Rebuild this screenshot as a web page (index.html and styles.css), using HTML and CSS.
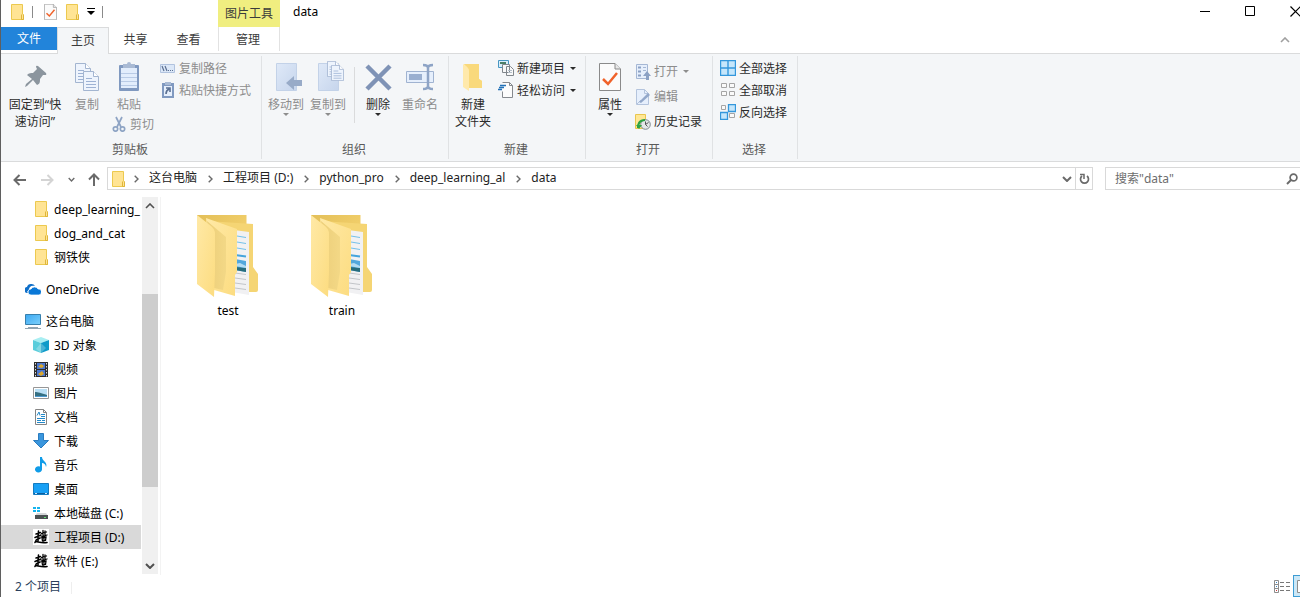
FILE: index.html
```html
<!DOCTYPE html>
<html lang="zh-CN">
<head>
<meta charset="utf-8">
<title>data</title>
<link rel="stylesheet" href="styles.css">
</head>
<body>
<svg class="defs" aria-hidden="true">
  <defs>
    <linearGradient id="gFront" x1="0" y1="0" x2="1" y2="1"><stop offset="0" stop-color="#ffe9a6"/><stop offset="1" stop-color="#fcdc80"/></linearGradient>
    <linearGradient id="gBack" x1="0" y1="0" x2="1" y2="1"><stop offset="0" stop-color="#e3bf58"/><stop offset="1" stop-color="#fbd977"/></linearGradient>
    <linearGradient id="gMid" x1="0" y1="0" x2="1" y2="0"><stop offset="0" stop-color="#ecce79"/><stop offset="1" stop-color="#f3d886"/></linearGradient>
    <linearGradient id="gBlue" x1="0" y1="0" x2="1" y2="1"><stop offset="0" stop-color="#3ba8f2"/><stop offset="1" stop-color="#7cd0fb"/></linearGradient>
    <linearGradient id="gSteel" x1="0" y1="0" x2="1" y2="1"><stop offset="0" stop-color="#dfe9f8"/><stop offset="1" stop-color="#c6d5ec"/></linearGradient>
    <symbol id="folder" viewBox="0 0 16 16"><path d="M2.500 .5h11v9.500l1 1v4.500h-12z" fill="#ffe494" stroke="#ecc94f"/><path d="M12.500 10.500v5M14.500 10.500v5h-2" fill="none" stroke="#dfb63a"/></symbol>
    <symbol id="caret" viewBox="0 0 6 3"><path d="M0 0h6L3 3z" fill="currentColor"/></symbol>
    <symbol id="chevDown" viewBox="0 0 10 6"><path d="M1 1l4 4 4-4" fill="none" stroke="currentColor" stroke-width="2"/></symbol>
    <symbol id="chevRight" viewBox="0 0 5 8"><path d="M.7.7L4 4 .7 7.300" fill="none" stroke="currentColor" stroke-width="1.400"/></symbol>
    <symbol id="chevUp" viewBox="0 0 10 6"><path d="M1 5l4-4 4 4" fill="none" stroke="currentColor" stroke-width="1.600"/></symbol>
    <symbol id="arrow" viewBox="0 0 14 12"><path d="M6.500 1L1.500 6l5 5M1.500 6H13" fill="none" stroke="currentColor" stroke-width="2"/></symbol>
    <symbol id="page" viewBox="0 0 16 20"><path d="M.5.5h10l5 5v14H.5z" fill="#eef4fd" stroke="#a3b5d0"/><path d="M10.500.5v5h5" fill="#fff" stroke="#a3b5d0"/><path d="M3 7.500h6M3 10.500h10M3 13.500h10M3 16.500h10" stroke="#9db2d4"/></symbol>
    <symbol id="propDoc" viewBox="0 0 22 28"><path d="M.5.5h15.500l5.500 5.500v21.500H.5z" fill="#fbfbfb" stroke="#8a8a8a"/><path d="M16 .5V6h5.500" fill="#e8e8e8" stroke="#8a8a8a"/><path d="M4 16l5 5 9-11" fill="none" stroke="#f0622a" stroke-width="2.500"/></symbol>
    <symbol id="seal" viewBox="0 0 16 16"><path d="M0 0h16v16H0z" fill="#fff"/><path d="M5.500 2L5 8M3 5l4.500-1.500M2 8.500L8 6M5 8v4M5 10l2-1M3.500 10.500L2 13.500M3 12.500c3 .5 6 2 11 1" fill="none" stroke="#000" stroke-width="1.600" stroke-linecap="round"/><path d="M8.500 4.500L13.500 3M10 1.500v6M12 2v5M8 8l6-2M9 9l.5 3M9 9l4-1-.5 3.500-3 .5M11 8v4" fill="none" stroke="#000" stroke-width="1.300" stroke-linecap="round"/></symbol>
    <symbol id="openFolder" viewBox="0 0 62 84">
      <path d="M0 1h49.500v60H0z" fill="url(#gBack)"/>
      <path d="M10 7L56 10v43l5 7v16q0 2-2 2H30z" fill="#f5d574"/>
      <path d="M37 16l15 2v63l-17-3z" fill="#f1f1f3"/>
      <path d="M38 59l11 1.500M38 64l11 1.500M38 69l11 1.500M38 74l11 1.500" stroke="#c2c5c9"/>
      <path d="M40 22l9 1.500M40 28l9 1.500M40 34l9 1.500" stroke="#73c1ea"/><path d="M38 41l11 1.500" stroke="#45a4dc" stroke-width="2"/>
      <path d="M38 45l11 2v11l-11-2z" fill="#51a7dc"/><path d="M38 53l11 1v4l-11-2z" fill="#286d7d"/><path d="M38 50l5-1 6 3v2l-11-2z" fill="#b4dcf2"/>
      <path d="M9 4l31 11v43l-2 3v21L17 76z" fill="url(#gFront)"/>
      <path d="M10 7l19 16v35l-3 18-9-2z" fill="url(#gMid)"/>
      <path d="M0 1l14 11q4 3 4 8v38l-1 25L0 70z" fill="url(#gFront)"/>
    </symbol>
  </defs>
</svg>

<div class="window">
  <header class="top">
    <div class="lead">
      <div class="quick">
        <svg class="i16"><use href="#folder"/></svg>
        <span class="bar"></span>
        <button class="plain" aria-label="属性"><svg width="13" height="16"><use href="#propDoc"/></svg></button>
        <button class="plain" aria-label="新建文件夹"><svg class="i16"><use href="#folder"/></svg></button>
        <button class="plain" aria-label="自定义"><svg width="8" height="7" viewBox="0 0 8 7"><path d="M0 .5h8" stroke="#000"/><path d="M0 3h8L4 7z"/></svg></button>
        <span class="bar"></span>
      </div>
      <nav class="tabs">
        <button class="tab file">文件</button>
        <button class="tab active">主页</button>
        <button class="tab">共享</button>
        <button class="tab">查看</button>
      </nav>
    </div>
    <div class="context">
      <div class="context-title">图片工具</div>
      <button class="context-tab">管理</button>
    </div>
    <h1 class="title">data</h1>
    <div class="controls">
      <div class="caption">
        <button class="plain" aria-label="最小化"><svg width="11" height="11"><path d="M0 5.500h10" stroke="#000"/></svg></button>
        <button class="plain" aria-label="最大化"><svg width="11" height="11"><path d="M.5.5h9v9h-9z" fill="none" stroke="#000"/></svg></button>
        <button class="plain" aria-label="关闭"><svg width="11" height="11"><path d="M.5.5l10 10M10.500.5l-10 10" stroke="#000" stroke-width="1.200"/></svg></button>
      </div>
      <button class="plain collapse" aria-label="折叠功能区"><svg width="10" height="6"><use href="#chevUp"/></svg></button>
    </div>
  </header>

  <section class="ribbon">
    <div class="group g-clip">
      <div class="tools">
        <button class="big wide"><svg class="i32" viewBox="0 0 32 32"><path d="M19 5l8 7q1 2-1 2l-2 0-3 4c0 3 0 5-3 6l-4-5-6 6-2 1 1-3 6-5-5-4c2-2 4-2 6-2l4-4-1-2q0-2 2-1z" fill="#8b959e"/></svg><span>固定到“快<br>速访问”</span></button>
        <button class="big dim"><svg class="i32" viewBox="0 0 32 32"><use href="#page" x="4" y="2" width="16" height="20"/><use href="#page" x="12" y="10" width="16" height="20"/></svg><span>复制</span></button>
        <div class="stack">
          <button class="big dim"><svg class="i32" viewBox="0 0 32 32"><path d="M7 4h18q1 0 1 1v24q0 1-1 1H7q-1 0-1-1V5q0-1 1-1z" fill="#8099c0"/><path d="M8 7h16v20H8z" fill="#e2edfc"/><path d="M8 12.500h16M8 16.500h16M8 20.500h16M8 24.500h16" stroke="#b9cbe6"/><path d="M10 3h4q0-2 2-2t2 2h4v4H10z" fill="#a9bad4"/></svg><span>粘贴</span></button>
          <button class="row dim cut"><svg class="i16" viewBox="0 0 16 16"><g fill="none" stroke="#8ea4c4" stroke-width="1.700"><path d="M5 1l5 10M11 1L6 11"/><circle cx="4.500" cy="13" r="2.200"/><circle cx="11.500" cy="13" r="2.200"/></g></svg><span>剪切</span></button>
        </div>
        <div class="list">
          <button class="row dim"><svg class="i16" viewBox="0 0 16 16"><path d="M.5 4.500h14v8H.5z" fill="#dce8f8" stroke="#b1c3df"/><path d="M2 6l2 5M5 6l2 5" stroke="#5b7092" stroke-width="1.200"/><path d="M8 10.500h1M10 10.500h1M12 10.500h1" stroke="#5b7092"/></svg><span>复制路径</span></button>
          <button class="row dim"><svg class="i16" viewBox="0 0 16 16"><path d="M2 1h12v15H2z" fill="#8099c0"/><path d="M4 4h8v10H4z" fill="#e6effc"/><path d="M5 0h6v3H5z" fill="#a9bad4"/><path d="M6 12c0-3 1-4 3-5M6 6h4v4" fill="none" stroke="#5b7092" stroke-width="1.600"/></svg><span>粘贴快捷方式</span></button>
        </div>
      </div>
      <div class="label">剪贴板</div>
    </div>

    <div class="group g-org">
      <div class="tools">
        <button class="big dim"><svg class="i32" viewBox="0 0 32 32"><path d="M6.500 2.500h20v27h-20z" fill="url(#gSteel)" stroke="#c3d2e8"/><path d="M16 22l8-7v4h8v6h-8v4z" fill="#98abc8"/></svg><span>移动到</span><svg class="drop"><use href="#caret"/></svg></button>
        <button class="big dim"><svg class="i32" viewBox="0 0 32 32"><path d="M6.500 2.500h20v27h-20z" fill="url(#gSteel)" stroke="#c3d2e8"/><use href="#page" x="15" y="0" width="13" height="16"/><use href="#page" x="19" y="4" width="13" height="16"/></svg><span>复制到</span><svg class="drop"><use href="#caret"/></svg></button>
        <span class="divider"></span>
        <button class="big"><svg class="i32" viewBox="0 0 32 32"><path d="M5 5l23 23M28 5L5 28" stroke="#7f93b6" stroke-width="4.500"/></svg><span>删除</span><svg class="drop"><use href="#caret"/></svg></button>
        <button class="big dim"><svg class="i32" viewBox="0 0 32 32"><path d="M2.500 10.500h27v11h-27z" fill="#e6effc" stroke="#a0b3d1"/><path d="M5 13h13v6H5z" fill="#9aafd0"/><path d="M19 4q5 0 5 3v18q0 3-5 3M29 4q-5 0-5 3M24 25q0 3 5 3" fill="none" stroke="#8ea4c6" stroke-width="2.500"/></svg><span>重命名</span></button>
      </div>
      <div class="label">组织</div>
    </div>

    <div class="group g-new">
      <div class="tools">
        <button class="big"><svg class="i32" viewBox="0 0 32 32"><path d="M7 3h15v15l3 2v7H12z" fill="url(#gFront)"/><path d="M12 27V10q0-2-2-4L7 3h15v15l3 2v7z" fill="#f9d97c"/><path d="M6 3l4 3q2 2 2 4v20l-6-4z" fill="#ffe9ab"/></svg><span>新建<br>文件夹</span></button>
        <div class="list">
          <button class="row"><svg class="i16" viewBox="0 0 16 16"><path d="M.5.5h10v7H.5z" fill="#d9eefb" stroke="#4796c2"/><path d="M2 3h6" stroke="#4c7f68" stroke-width="2"/><path d="M4.500 4.500h7v8h-7zM8.500 6.500h4l3 3v6h-7z" fill="#f8f8f8" stroke="#80868c"/><path d="M10 10.500h4M10 12.500h4" stroke="#b4bfca"/></svg><span>新建项目</span><svg class="drop"><use href="#caret"/></svg></button>
          <button class="row"><svg class="i16" viewBox="0 0 16 16"><path d="M4.500.5h7l3 3v12h-10" fill="#fcfcfc" stroke="#85898e"/><path d="M4.500 9.500v6M11.500.5v3h3" fill="none" stroke="#85898e"/><path d="M2 3.500h6M1 5.500h5M0 7.500h4" stroke="#2372b8" stroke-width="1.300"/></svg><span>轻松访问</span><svg class="drop"><use href="#caret"/></svg></button>
        </div>
      </div>
      <div class="label">新建</div>
    </div>

    <div class="group g-open">
      <div class="tools">
        <button class="big"><svg class="i32" viewBox="0 0 32 32"><use href="#propDoc" x="5" y="2" width="22" height="28"/></svg><span>属性</span><svg class="drop"><use href="#caret"/></svg></button>
        <div class="list loose">
          <button class="row dim"><svg class="i16" viewBox="0 0 16 16"><path d="M1.500.5h11v14h-11z" fill="#e6effc" stroke="#a5b7d4"/><path d="M3 3.500h3M3 7.500h3M3 11.500h3" stroke="#8ba1c4" stroke-width="2"/><path d="M8 3.500h3M8 6.500h3" stroke="#a5b7d4"/><path d="M11 16v-4H8l4-5 4 5h-2v4z" fill="#8ba1c4"/></svg><span>打开</span><svg class="drop"><use href="#caret"/></svg></button>
          <button class="row dim"><svg class="i16" viewBox="0 0 16 16"><path d="M1.500.5h8l4 4v11h-12z" fill="#e6effc" stroke="#b4c4dd"/><path d="M9.500.5v4h4M2 15l4-4" fill="none" stroke="#b4c4dd"/><path d="M4 13l9-9 2 2-9 8z" fill="#93a8ca"/></svg><span>编辑</span></button>
          <button class="row"><svg class="i16" viewBox="0 0 16 16"><path d="M.5.5h10v14H.5z" fill="#ffe795" stroke="#e9c64e"/><circle cx="10.500" cy="10.500" r="4.800" fill="#e3e7e9" stroke="#7f8a8f"/><path d="M10.500 7.500v3l3-2M10.500 10.500l2 2" fill="none" stroke="#555"/><path d="M3 14c0-4 1-8 7-8" fill="none" stroke="#2ca344" stroke-width="2.200"/><path d="M1 11h6l-3 4z" fill="#2ca344"/></svg><span>历史记录</span></button>
        </div>
      </div>
      <div class="label">打开</div>
    </div>

    <div class="group g-select">
      <div class="tools">
        <div class="list">
          <button class="row"><svg class="i16" viewBox="0 0 16 16"><path d="M.5.5h15v15H.5zM8 0v16M0 8h16" fill="#c5e6fb" stroke="#3397dc" stroke-width="1.400"/></svg><span>全部选择</span></button>
          <button class="row"><svg class="i16" viewBox="0 0 16 16"><path d="M1.500 1.500h5v4h-5zM9.500 1.500h5v4h-5zM1.500 9.500h5v4h-5zM9.500 9.500h5v4h-5z" fill="#fafafa" stroke="#a5a5a5"/></svg><span>全部取消</span></button>
          <button class="row"><svg class="i16" viewBox="0 0 16 16"><path d="M1.500 1.500h4v4h-4zM9.500 9.500h5v4h-5z" fill="#fafafa" stroke="#a5a5a5"/><path d="M8.500.5h7v7h-7zM.5 8.500h7v7h-7z" fill="#c5e6fb" stroke="#3397dc" stroke-width="1.300"/></svg><span>反向选择</span></button>
        </div>
      </div>
      <div class="label">选择</div>
    </div>
  </section>

  <div class="address-row">
    <div class="history">
      <button class="plain" aria-label="后退"><svg width="14" height="12"><use href="#arrow"/></svg></button>
      <button class="plain off" aria-label="前进"><svg width="14" height="12" viewBox="0 0 14 12"><path d="M7.500 1l5 5-5 5M12.500 6H1" fill="none" stroke="currentColor" stroke-width="2"/></svg></button>
      <button class="plain" aria-label="最近位置"><svg width="7" height="5"><use href="#chevDown"/></svg></button>
      <button class="plain" aria-label="向上"><svg width="12" height="14" viewBox="0 0 12 14"><path d="M1 6.500l5-5 5 5M6 1.500V13" fill="none" stroke="currentColor" stroke-width="2"/></svg></button>
    </div>
    <div class="address">
      <svg class="i16"><use href="#folder"/></svg>
      <svg class="sep first"><use href="#chevRight"/></svg><a href="#">这台电脑</a>
      <svg class="sep"><use href="#chevRight"/></svg><a href="#">工程项目 (D:)</a>
      <svg class="sep"><use href="#chevRight"/></svg><a href="#">python_pro</a>
      <svg class="sep"><use href="#chevRight"/></svg><a href="#">deep_learning_al</a>
      <svg class="sep"><use href="#chevRight"/></svg><a href="#">data</a>
      <button class="plain more" aria-label="以前的位置"><svg width="10" height="6"><use href="#chevDown"/></svg></button>
      <button class="plain refresh" aria-label="刷新"><svg width="11" height="12" viewBox="0 0 11 12"><path d="M3 3a4 4 0 1 0 5 0" fill="none" stroke="currentColor" stroke-width="1.700"/><path d="M1 1.500h4V6" fill="none" stroke="currentColor" stroke-width="1.500"/></svg></button>
    </div>
    <div class="search">
      <input type="text" placeholder="搜索&quot;data&quot;" aria-label="搜索">
      <button class="plain" aria-label="搜索"><svg width="12" height="12" viewBox="0 0 12 12"><circle cx="7.500" cy="4.500" r="3.400" fill="none" stroke="currentColor" stroke-width="1.700"/><path d="M5 7L1 11" stroke="currentColor" stroke-width="2"/></svg></button>
    </div>
  </div>

  <main class="body">
    <nav class="tree">
      <a class="node sub" href="#"><svg class="i16"><use href="#folder"/></svg><span>deep_learning_</span></a>
      <a class="node sub" href="#"><svg class="i16"><use href="#folder"/></svg><span>dog_and_cat</span></a>
      <a class="node sub" href="#"><svg class="i16"><use href="#folder"/></svg><span>钢铁侠</span></a>
      <a class="node root" href="#"><svg class="i16" viewBox="0 0 16 16"><path d="M3 12a3 3 0 0 1-1-6 4 4 0 0 1 4-3 4 4 0 0 1 4 2c-4-1-6 1-6 4-2 1-2 2-1 3z" fill="#0f6fc9"/><path d="M6 14a3 3 0 0 1 0-6 4 4 0 0 1 7 0 3 3 0 0 1 1 6z" fill="#0a78d7" stroke="#fff" stroke-width=".7"/></svg><span>OneDrive</span></a>
      <a class="node root" href="#"><svg class="i16" viewBox="0 0 16 16"><path d="M.5 1.500h15v10H.5z" fill="url(#gBlue)" stroke="#3880ad"/><path d="M3 14.500h10M0 15.500h16" stroke="#92a5b2"/></svg><span>这台电脑</span></a>
      <a class="node sub" href="#"><svg class="i16" viewBox="0 0 16 16"><path d="M0 3l8-3 8 3-8 3z" fill="#a8eef2"/><path d="M0 3l8 3v10l-8-3z" fill="#5acddb"/><path d="M16 3L8 6v10l8-3z" fill="#0e9bc9"/><path d="M8 6l5 5-5 5-5-4z" fill="#fff" opacity=".25"/></svg><span>3D 对象</span></a>
      <a class="node sub" href="#"><svg class="i16" viewBox="0 0 16 16"><path d="M1 1h14v15H1z" fill="#2d2d2d"/><path d="M2.500 2v14M13.500 2v14" stroke="#ddd" stroke-dasharray="1.500 1.500"/><path d="M4 2h8v6H4zM4 9h8v6H4z" fill="#4c78d0"/><path d="M5 6l3-3 3 2-2 2zM5 13l4-3 2 3-3 2z" fill="#dba82d"/></svg><span>视频</span></a>
      <a class="node sub" href="#"><svg class="i16" viewBox="0 0 16 16"><path d="M.5 2.500h15v11H.5z" fill="#fff" stroke="#979797"/><path d="M2 4h12v8H2z" fill="#b9dff5"/><path d="M2 7c3 0 6 1 12 3v2H2z" fill="#357083"/><path d="M2 11h12v1H2z" fill="#4e9ad1"/></svg><span>图片</span></a>
      <a class="node sub" href="#"><svg class="i16" viewBox="0 0 16 16"><path d="M2.500.5h8l3 3v12h-11z" fill="#fff" stroke="#858585"/><path d="M10.500.5v3h3" fill="none" stroke="#858585"/><path d="M4 6.500l2-3.500 1 3.500M8 5.500h4M8 7.500h4M4 9.500h8M4 11.500h4M9 11.500h3M4 13.500h8" fill="none" stroke="#2489c9"/></svg><span>文档</span></a>
      <a class="node sub" href="#"><svg class="i16" viewBox="0 0 16 16"><path d="M5.500.5h5v7h5L8 15 .5 7.500h5z" fill="#3a96dd" stroke="#2a7cc0"/></svg><span>下载</span></a>
      <a class="node sub" href="#"><svg class="i16" viewBox="0 0 16 16"><path d="M7 0h2c0 4 6 5 4 10-.5-3-2-4-4-4v6.500a3.500 3.200 0 1 1-2-3z" fill="#109ce8"/></svg><span>音乐</span></a>
      <a class="node sub" href="#"><svg class="i16" viewBox="0 0 16 16"><path d="M.5 2.500h15v11H.5z" fill="#18a0f5" stroke="#147bc0"/><path d="M1 12.500h14" stroke="#0b5e9e"/><path d="M2 12.500h2M12 12.500h2" stroke="#cfeaff"/></svg><span>桌面</span></a>
      <a class="node sub" href="#"><svg class="i16" viewBox="0 0 16 16"><path d="M0 2h3v2H0zM4 2h3v2H4zM0 5h3v2H0zM4 5h3v2H4z" fill="#14b4ee"/><path d="M4 8h9l2 3H2z" fill="#d4d6d8"/><path d="M2 10h13v4H2z" fill="#4b5052"/><path d="M11 12.500h2" stroke="#60e070"/></svg><span>本地磁盘 (C:)</span></a>
      <a class="node sub selected" href="#"><svg class="i16"><use href="#seal"/></svg><span>工程项目 (D:)</span></a>
      <a class="node sub" href="#"><svg class="i16"><use href="#seal"/></svg><span>软件 (E:)</span></a>
    </nav>
    <div class="scroll">
      <button class="plain" aria-label="向上滚动"><svg width="10" height="6"><use href="#chevUp"/></svg></button>
      <span class="before"></span><span class="thumb"></span><span class="after"></span>
      <button class="plain" aria-label="向下滚动"><svg width="10" height="6"><use href="#chevDown"/></svg></button>
    </div>
    <section class="files">
      <a class="tile" href="#"><svg width="62" height="84"><use href="#openFolder"/></svg><span>test</span></a>
      <a class="tile" href="#"><svg width="62" height="84"><use href="#openFolder"/></svg><span>train</span></a>
    </section>
  </main>

  <footer class="status">
    <span class="count">2 个项目</span>
    <button class="plain view" aria-label="详细信息"><svg width="17" height="13" viewBox="0 0 17 13"><path d="M.5.5h4v12h-4zM0 4.500h5M0 8.500h5" fill="#fff" stroke="#8d8d8d"/><path d="M6 2.500h4M12 2.500h4M6 6.500h4M12 6.500h4M6 10.500h4M12 10.500h4" stroke="#777"/><path d="M2 2.500h1M2 6.500h1" stroke="#3a87c8"/><path d="M2 10.500h1" stroke="#c33"/></svg></button>
    <button class="plain view on" aria-label="大图标"><svg width="14" height="13"><path d="M.5.5h13v12H.5z" fill="#fff" stroke="#8d8d8d"/></svg></button>
  </footer>
</div>
</body>
</html>
```
FILE: styles.css
```css
* { box-sizing: border-box; }
body {
  margin: 0;
  overflow: hidden;
  background: #fff;
  color: #000;
  font: 12px/17px "Noto Sans", "Noto Sans CJK SC", sans-serif;
}
button, input { font: inherit; color: inherit; }
button { border: 0; padding: 0; background: none; }
a { color: inherit; text-decoration: none; }
svg { display: block; flex: none; }
.defs { position: absolute; width: 0; height: 0; }
.i16 { width: 16px; height: 16px; }
.i32 { width: 32px; height: 32px; }
.plain { display: flex; align-items: center; justify-content: center; }

.window {
  display: flex;
  flex-direction: column;
  height: 100vh;
  border-left: 1px solid #5f5f5f;
}

/* title bar and tabs */
.top { display: flex; flex: none; height: 54px; border-bottom: 1px solid #dadbdc; }
.lead { width: 217px; }
.quick { display: flex; align-items: center; height: 27px; padding: 0 0 4px 8px; gap: 7px; }
.bar { width: 1px; height: 12px; background: #8a8a8a; }
.quick .bar { margin-right: 4px; }
.tabs { display: flex; height: 27px; }
.tab { width: 53px; height: 25px; color: #3b3b3b; }
.tab.file { width: 56px; height: 23px; background: #2284da; color: #fff; }
.tab.active {
  width: 52px;
  height: 27px;
  padding-bottom: 2px;
  border: 1px solid #dadbdc;
  border-bottom: 0;
  background: #f4f6f8;
}
.context { display: flex; flex-direction: column; width: 62px; color: #3b3b3b; }
.context-title { height: 27px; line-height: 27px; text-align: center; background: #f0ee80; }
.context-tab { height: 24px; padding-right: 2px; border: solid #e2e2e2; border-width: 0 1px; }
.title { margin: 3px 13px; font-size: 12px; font-weight: normal; line-height: 17px; }
.controls { margin-left: auto; }
.caption { display: flex; height: 23px; gap: 34px; margin-right: -1px; }
.collapse { width: 30px; height: 34px; margin-left: auto; color: #a0a0a0; }

/* ribbon */
.ribbon { display: flex; flex: none; min-height: 108px; background: #f4f6f8; border-bottom: 1px solid #dadbdc; }
.group {
  display: flex;
  flex-direction: column;
  justify-content: space-between;
  margin: 2px 0;
  padding: 1px 0;
  border-right: 1px solid #e0e2e4;
}
.g-clip { width: 261px; }
.g-org { width: 187px; }
.g-new { width: 137px; }
.g-open { width: 127px; }
.g-select { width: 85px; }
.tools { display: flex; }
.g-clip .tools, .g-org .tools, .g-new .tools, .g-open .tools { padding-left: 3px; }
.label { padding-right: 2px; text-align: center; color: #5a5a5a; }
.big {
  display: flex;
  flex-direction: column;
  align-items: center;
  align-self: flex-start;
  min-width: 42px;
  padding-top: 4px;
  color: #2b2b2b;
  white-space: nowrap;
}
.big span { margin-top: 3px; line-height: 17px; }
.big.wide { min-width: 62px; }
.drop { width: 6px; height: 3px; }
.stack { display: flex; flex-direction: column; align-items: flex-start; width: 49px; }
.row { display: flex; align-items: center; gap: 3px; height: 22px; color: #2b2b2b; white-space: nowrap; }
.row .drop { margin-left: 2px; }
.cut { padding-left: 3px; }
.dim { color: #8d8d8d; }
.list { display: flex; flex-direction: column; margin-left: 4px; }
.g-clip .list { margin-left: 3px; }
.g-select .list { margin-left: 7px; }
.loose { padding-top: 2px; }
.loose .row { height: 25px; }
.divider { width: 1px; margin: 10px 2px 0 5px; height: 56px; background: #dadbdc; }

/* address bar */
.address-row { display: flex; flex: none; align-items: center; height: 35px; padding-bottom: 2px; color: #6a6a6a; }
.history { display: flex; align-items: center; justify-content: space-between; width: 106px; padding: 2px 7px 0 12px; }
.off { color: #d4d4d4; }
.address {
  display: flex;
  flex: 1;
  align-items: center;
  height: 23px;
  padding-left: 2px;
  border: 1px solid #d9d9d9;
}
.address a { padding-bottom: 2px; color: #222; white-space: nowrap; }
.sep { width: 5px; height: 8px; margin: 0 10px 0 11px; }
.sep.first { margin-left: 8px; }
.more { width: 16px; margin-left: auto; }
.refresh { width: 17px; height: 21px; border-left: 1px solid #d9d9d9; }
.search {
  display: flex;
  width: 195px;
  height: 23px;
  margin-left: 12px;
  padding: 0 2px 0 9px;
  border: 1px solid #d9d9d9;
  border-right: 0;
}
.search input { flex: 1; min-width: 0; padding: 0; border: 0; outline: 0; background: none; }
.search input::placeholder { color: #6d6d6d; opacity: 1; }

/* tree and files */
.body { display: flex; flex: 1; min-height: 0; }
.tree { width: 140px; overflow: hidden; flex: none; }
.node { display: flex; align-items: center; gap: 5px; height: 24px; white-space: nowrap; }
.sub { padding-left: 32px; }
.root { padding-left: 24px; margin: 8px 0 0; }
.selected { background: #d9d9d9; }
.scroll { display: flex; flex-direction: column; width: 16px; margin: 0 2px 1px 1px; background: #f0f0f0; color: #505050; }
.scroll .plain { height: 17px; }
.before { flex: 80; }
.thumb { flex: 193; background: #cdcdcd; }
.after { flex: 70; }
.files { display: flex; flex: 1; align-items: flex-start; padding: 17px 0 0 10px; border-left: 1px solid #f3f3f3; }
.tile { display: flex; flex-direction: column; align-items: center; gap: 4px; width: 114px; }

/* status bar */
.status { display: flex; flex: none; height: 22px; color: #2b3f5c; }
.count { padding: 3px 10px 0 14px; }
.count::after { content: ""; display: inline-block; height: 12px; margin-left: 10px; border-left: 1px solid #eee; vertical-align: middle; }
.view { margin-left: auto; }
.view.on { width: 7px; margin-left: 2px; padding-left: 3px; justify-content: flex-start; overflow: hidden; background: #cce8f7; border: solid #3c9cd4; border-width: 1px 0 1px 1px; }
```
